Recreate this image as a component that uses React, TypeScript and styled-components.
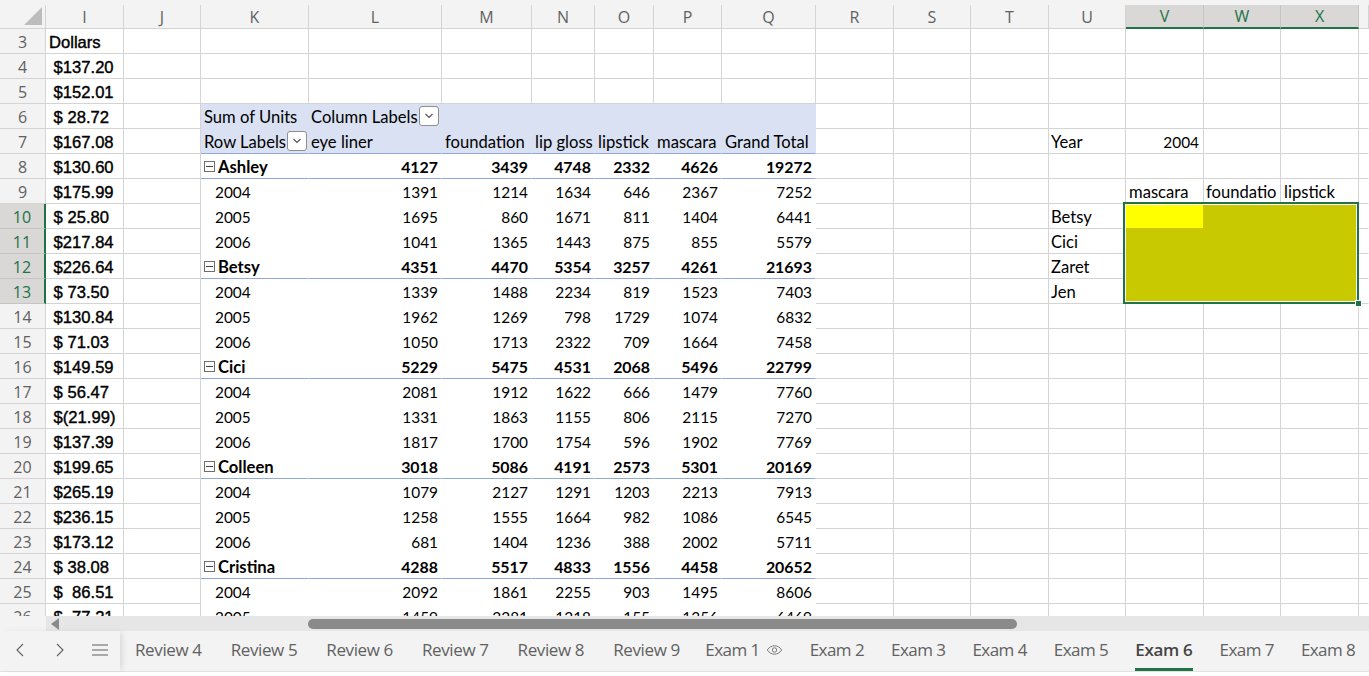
import * as React from 'react';
import styled, { createGlobalStyle } from 'styled-components';

const GREEN = '#217346';
const GRID = '#d4d4d4';
const BLUE = '#8ea9db';
const HEADER_BG = '#f3f3f3';
const HEADER_SELECTED = '#d9d8d6';
const PIVOT_BG = '#d9e1f2';
const OLIVE = '#c9c900';

const COLUMNS = ['I', 'J', 'K', 'L', 'M', 'N', 'O', 'P', 'Q', 'R', 'S', 'T', 'U', 'V', 'W', 'X', ''];
const SELECTED_COLUMNS = ['V', 'W', 'X'];
const SELECTED_ROWS = [10, 11, 12, 13];

const DOLLARS: Record<number, string> = {
	3: 'Dollars',
	4: ' $137.20',
	5: ' $152.01',
	6: ' $ 28.72',
	7: ' $167.08',
	8: ' $130.60',
	9: ' $175.99',
	10: ' $ 25.80',
	11: ' $217.84',
	12: ' $226.64',
	13: ' $ 73.50',
	14: ' $130.84',
	15: ' $ 71.03',
	16: ' $149.59',
	17: ' $ 56.47',
	18: ' $(21.99)',
	19: ' $137.39',
	20: ' $199.65',
	21: ' $265.19',
	22: ' $236.15',
	23: ' $173.12',
	24: ' $ 38.08',
	25: ' $  86.51',
	26: ' $  77.21'
};

const PIVOT: Record<number, string[]> = {
	8: ['Ashley', '4127', '3439', '4748', '2332', '4626', '19272'],
	9: ['2004', '1391', '1214', '1634', '646', '2367', '7252'],
	10: ['2005', '1695', '860', '1671', '811', '1404', '6441'],
	11: ['2006', '1041', '1365', '1443', '875', '855', '5579'],
	12: ['Betsy', '4351', '4470', '5354', '3257', '4261', '21693'],
	13: ['2004', '1339', '1488', '2234', '819', '1523', '7403'],
	14: ['2005', '1962', '1269', '798', '1729', '1074', '6832'],
	15: ['2006', '1050', '1713', '2322', '709', '1664', '7458'],
	16: ['Cici', '5229', '5475', '4531', '2068', '5496', '22799'],
	17: ['2004', '2081', '1912', '1622', '666', '1479', '7760'],
	18: ['2005', '1331', '1863', '1155', '806', '2115', '7270'],
	19: ['2006', '1817', '1700', '1754', '596', '1902', '7769'],
	20: ['Colleen', '3018', '5086', '4191', '2573', '5301', '20169'],
	21: ['2004', '1079', '2127', '1291', '1203', '2213', '7913'],
	22: ['2005', '1258', '1555', '1664', '982', '1086', '6545'],
	23: ['2006', '681', '1404', '1236', '388', '2002', '5711'],
	24: ['Cristina', '4288', '5517', '4833', '1556', '4458', '20652'],
	25: ['2004', '2092', '1861', '2255', '903', '1495', '8606'],
	26: ['2005', '1459', '2281', '1218', '155', '1356', '6469']
};

const PIVOT_HEADER = ['eye liner', 'foundation', 'lip gloss', 'lipstick', 'mascara', 'Grand Total'];
const LOOKUP_LABELS: Record<number, string> = { 7: 'Year', 10: 'Betsy', 11: 'Cici', 12: 'Zaret', 13: 'Jen' };
const LOOKUP_HEADER = ['mascara', 'foundatio', 'lipstick'];

const REVIEW_TABS = ['Review 4', 'Review 5', 'Review 6', 'Review 7', 'Review 8', 'Review 9'];
const EXAM_TABS = ['Exam 1', 'Exam 2', 'Exam 3', 'Exam 4', 'Exam 5', 'Exam 6', 'Exam 7', 'Exam 8'];

const GlobalStyle = createGlobalStyle`
	html, body, #root {
		margin: 0;
		height: 100%;
		background: #fff;
	}
`;

const Page = styled.div`
	width: 1369px;
	height: 676px;
	display: flex;
	flex-direction: column;
	overflow: hidden;
	background: #fff;
`;

const SheetViewport = styled.div`
	height: 616px;
	overflow: hidden;
	flex: none;
`;

const SheetGrid = styled.div`
	position: relative;
	display: grid;
	grid-template-columns: 46px 78px 77px 108px 133px 90px 63px 59px 68px 94px 78px 77px 78px 77px 78px 77px 78px 1fr;
	grid-template-rows: 24px;
	grid-auto-rows: 25px;
	padding-top: 5px;
	background: ${HEADER_BG};
`;

const Corner = styled.div`
	background: ${HEADER_BG};
	border-right: 1px solid ${GRID};
	border-bottom: 1px solid ${GRID};
	display: flex;
	justify-content: flex-end;
	padding: 2px 3px 0 0;
	box-sizing: border-box;
`;

const ColumnHeader = styled.div<{ $selected: boolean }>`
	display: flex;
	align-items: center;
	justify-content: center;
	box-sizing: border-box;
	font: 16px 'Open Sans', sans-serif;
	color: ${p => (p.$selected ? GREEN : '#616161')};
	background: ${p => (p.$selected ? HEADER_SELECTED : HEADER_BG)};
	border-right: 1px solid ${p => (p.$selected ? '#c4c4c4' : GRID)};
	border-bottom: ${p => (p.$selected ? `2px solid ${GREEN}` : `1px solid ${GRID}`)};
`;

const RowHeader = styled.div<{ $selected: boolean }>`
	display: flex;
	align-items: center;
	justify-content: center;
	box-sizing: border-box;
	padding-top: 2px;
	font: 16px 'Open Sans', sans-serif;
	color: ${p => (p.$selected ? GREEN : '#616161')};
	background: ${p => (p.$selected ? HEADER_SELECTED : HEADER_BG)};
	border-right: ${p => (p.$selected ? `2px solid ${GREEN}` : `1px solid ${GRID}`)};
	border-bottom: 1px solid ${p => (p.$selected ? '#c4c4c4' : GRID)};
`;

const Cell = styled.div<{
	$fill?: string;
	$bottom?: string;
	$right?: string;
	$align?: string;
	$inset?: number;
	$trail?: number;
	$text?: boolean;
}>`
	display: flex;
	align-items: center;
	justify-content: ${p => p.$align || 'flex-start'};
	box-sizing: border-box;
	min-width: 0;
	overflow: hidden;
	white-space: pre;
	padding: 2px ${p => p.$trail ?? (p.$align === 'flex-end' ? 3 : 0)}px 0 ${p => p.$inset ?? 3}px;
	background: ${p => p.$fill || '#fff'};
	border-right: 1px solid ${p => p.$right || GRID};
	border-bottom: 1px solid ${p => p.$bottom || GRID};
	font: ${p => (p.$text ? 16.6 : 15.4)}px Lato, 'Liberation Sans', sans-serif;
	color: #000;
`;

const DollarCell = styled(Cell)`
	padding-top: 4px;
	font: 16.6px 'Liberation Sans', Arial, sans-serif;
	-webkit-text-stroke: 0.4px #000;
`;

const BoldCell = styled(Cell)`
	font-weight: 700;
	font-size: ${p => (p.$text ? 16.6 : 15.9)}px;
	padding-top: ${p => (p.$text ? 2 : 0)}px;
`;

const Label = styled.span`
	flex: none;
`;

const FilterButton = styled.div`
	flex: none;
	width: 20px;
	height: 20px;
	margin: -2px 0 0 1px;
	box-sizing: border-box;
	display: flex;
	align-items: center;
	justify-content: center;
	background: #fff;
	border: 1px solid #8f8f8f;
	border-radius: 3px;
`;

const CollapseBox = styled.div`
	flex: none;
	position: relative;
	width: 11px;
	height: 11px;
	margin: -2px 3px 0 0;
	box-sizing: border-box;
	border: 1px solid #6e6e6e;

	&::after {
		content: '';
		position: absolute;
		left: 1px;
		right: 1px;
		top: 4px;
		height: 1px;
		background: #444;
	}
`;

const Selection = styled.div`
	position: absolute;
	grid-column: 15 / 18;
	grid-row: 9 / 13;
	top: -2px;
	left: -3px;
	right: 0;
	bottom: 0;
	box-sizing: border-box;
	border: 2px solid ${GREEN};
	box-shadow: inset 0 0 0 1px #fff;
	pointer-events: none;
`;

const FillHandle = styled.div`
	position: absolute;
	right: -4px;
	bottom: -4px;
	width: 5px;
	height: 5px;
	background: ${GREEN};
	outline: 1px solid #fff;
`;

const ScrollRow = styled.div`
	display: flex;
	flex: none;
	height: 15px;
`;

const ScrollGutter = styled.div`
	width: 46px;
	background: ${HEADER_BG};
`;

const ScrollTrack = styled.div`
	flex: 1;
	display: flex;
	align-items: center;
	background: #e6e6e6;
`;

const ScrollArrow = styled.svg`
	flex: none;
	width: 10px;
	height: 12px;
	margin: 0 0 0 5px;
`;

const ScrollThumb = styled.div`
	width: 709px;
	height: 10px;
	margin-left: 247px;
	border-radius: 5px;
	background: #8a8a8a;
`;

const TabBar = styled.div`
	flex: none;
	height: 41px;
	box-sizing: border-box;
	display: flex;
	background: ${HEADER_BG};
	border-bottom: 1px solid #e1e1e1;
`;

const TabNav = styled.div`
	flex: none;
	width: 120px;
	display: flex;
	align-items: center;
	box-shadow: 4px 0 6px -2px rgba(0, 0, 0, 0.12);
	padding-bottom: 2px;
	box-sizing: border-box;
`;

const NavButton = styled.div`
	width: 40px;
	display: flex;
	justify-content: center;
`;

const TabList = styled.div`
	display: flex;
	padding-left: 0.5px;
	white-space: nowrap;
`;

const TabGroup = styled.div<{ $offset?: number }>`
	display: flex;
	margin-left: ${p => p.$offset || 0}px;
`;

const Tab = styled.div<{ $active?: boolean; $narrow?: boolean }>`
	position: relative;
	display: flex;
	align-items: center;
	gap: 6px;
	padding: 0 ${p => (p.$narrow ? 13.5 : 14.5)}px 3px;
	font: ${p => (p.$active ? 600 : 400)} 17px 'Open Sans', sans-serif;
	letter-spacing: ${p => (p.$active ? '-0.3px' : p.$narrow ? '-0.55px' : '-0.38px')};
	color: ${p => (p.$active ? '#444' : '#616161')};

	${p =>
		p.$active &&
		`&::after {
			content: '';
			position: absolute;
			left: 13.5px;
			right: 13.5px;
			bottom: 0;
			height: 3px;
			background: ${GREEN};
		}`}
`;

const DropArrow = () => (
	<svg width="10" height="6" viewBox="0 0 10 6" fill="none" stroke="#555" strokeWidth="1.2">
		<path d="M1.500 1 5 4.500 8.500 1" />
	</svg>
);

const pivotCells = (row: number) => {
	if (row === 6) {
		return [
			<Cell key="K" $text $fill={PIVOT_BG} $bottom={PIVOT_BG} $right={PIVOT_BG}>Sum of Units</Cell>,
			<Cell key="L" $text $inset={2} $fill={PIVOT_BG} $bottom={PIVOT_BG} $right={PIVOT_BG}>
				<Label>Column Labels</Label>
				<FilterButton><DropArrow /></FilterButton>
			</Cell>,
			...['M', 'N', 'O', 'P', 'Q'].map(c => <Cell key={c} $fill={PIVOT_BG} $bottom={PIVOT_BG} $right={PIVOT_BG} />)
		];
	}
	if (row === 7) {
		return [
			<Cell key="K" $text $fill={PIVOT_BG} $bottom={BLUE} $right={PIVOT_BG}>
				<Label>Row Labels</Label>
				<FilterButton><DropArrow /></FilterButton>
			</Cell>,
			...PIVOT_HEADER.map((h, i) => (
				<Cell key={h} $text $inset={i === 0 ? 2 : 3} $fill={PIVOT_BG} $bottom={BLUE} $right={PIVOT_BG}>
					{h}
				</Cell>
			))
		];
	}
	const values = PIVOT[row];
	if (!values) {
		return ['K', 'L', 'M', 'N', 'O', 'P', 'Q'].map(c => <Cell key={c} />);
	}
	const isGroup = !/^\d/.test(values[0]);
	const RowCell = isGroup ? BoldCell : Cell;
	const bottom = isGroup ? BLUE : '#fff';
	return [
		<RowCell key="K" $text={isGroup} $bottom={bottom} $right="#fff" $inset={isGroup ? 3 : 14}>
			{isGroup && <CollapseBox />}
			{values[0]}
		</RowCell>,
		...values.slice(1).map((v, i) => (
			<RowCell key={i} $bottom={bottom} $right="#fff" $align="flex-end">
				{v}
			</RowCell>
		))
	];
};

const lookupCells = (row: number) => {
	const cells = [<Cell key="U" $text $inset={2}>{LOOKUP_LABELS[row]}</Cell>];
	if (SELECTED_ROWS.includes(row)) {
		SELECTED_COLUMNS.forEach((c, i) => {
			const fill = row === 10 && i === 0 ? '#ffff00' : OLIVE;
			cells.push(<Cell key={c} $fill={fill} $bottom={OLIVE} $right={OLIVE} />);
		});
	} else if (row === 7) {
		cells.push(
			<Cell key="V" $align="flex-end" $inset={0} $trail={4}>2004</Cell>,
			<Cell key="W" />,
			<Cell key="X" />
		);
	} else if (row === 9) {
		LOOKUP_HEADER.forEach((h, i) => cells.push(<Cell key={h} $text $inset={i === 1 ? 2 : 3}>{h}</Cell>));
	} else {
		SELECTED_COLUMNS.forEach(c => cells.push(<Cell key={c} />));
	}
	return cells;
};

const Row = ({ row }: { row: number }) => (
	<>
		<RowHeader $selected={SELECTED_ROWS.includes(row)}>{row}</RowHeader>
		<DollarCell>{DOLLARS[row]}</DollarCell>
		<Cell />
		{pivotCells(row)}
		<Cell />
		<Cell />
		<Cell />
		{lookupCells(row)}
		<Cell $right="transparent" />
	</>
);

const rows = Array.from({ length: 24 }, (_, i) => i + 3);

export default function App() {
	return (
		<Page>
			<GlobalStyle />
			<SheetViewport>
				<SheetGrid>
					<Corner>
						<svg width="18" height="18" viewBox="0 0 18 18">
							<path d="M18 0V18H0Z" fill="#bdbdbd" />
						</svg>
					</Corner>
					{COLUMNS.map((c, i) =>
						c ? (
							<ColumnHeader key={c} $selected={SELECTED_COLUMNS.includes(c)}>
								{c}
							</ColumnHeader>
						) : (
							<ColumnHeader key={i} $selected={false} />
						)
					)}
					{rows.map(r => (
						<Row key={r} row={r} />
					))}
					<Selection>
						<FillHandle />
					</Selection>
				</SheetGrid>
			</SheetViewport>
			<ScrollRow>
				<ScrollGutter />
				<ScrollTrack>
					<ScrollArrow viewBox="0 0 10 12">
						<path d="M8 0V12L0 6Z" fill="#8a8a8a" />
					</ScrollArrow>
					<ScrollThumb />
				</ScrollTrack>
			</ScrollRow>
			<TabBar>
				<TabNav>
					<NavButton>
						<svg width="10" height="14" viewBox="0 0 10 14" fill="none" stroke="#616161" strokeWidth="1.1">
							<path d="M8 1 2 7l6 6" />
						</svg>
					</NavButton>
					<NavButton>
						<svg width="10" height="14" viewBox="0 0 10 14" fill="none" stroke="#616161" strokeWidth="1.1">
							<path d="M2 1l6 6-6 6" />
						</svg>
					</NavButton>
					<NavButton>
						<svg width="16" height="12" viewBox="0 0 16 12" fill="none" stroke="#616161" strokeWidth="1.2">
							<path d="M0 1H16M0 6H16M0 11H16" />
						</svg>
					</NavButton>
				</TabNav>
				<TabList>
					<TabGroup>
						{REVIEW_TABS.map(t => (
							<Tab key={t}>{t}</Tab>
						))}
					</TabGroup>
					<TabGroup $offset={-2.5}>
						{EXAM_TABS.map(t => (
							<Tab key={t} $narrow $active={t === 'Exam 6'}>
								{t}
								{t === 'Exam 1' && (
									<svg width="17" height="10" viewBox="0 0 16 10" fill="none" stroke="#7a7a7a" strokeWidth="1">
										<path d="M.7 5C3 2 5.300.8 8 .8S13 2 15.300 5C13 8 10.700 9.200 8 9.200S3 8 .7 5Z" />
										<circle cx="8" cy="5" r="2.200" />
									</svg>
								)}
							</Tab>
						))}
					</TabGroup>
				</TabList>
			</TabBar>
		</Page>
	);
}
